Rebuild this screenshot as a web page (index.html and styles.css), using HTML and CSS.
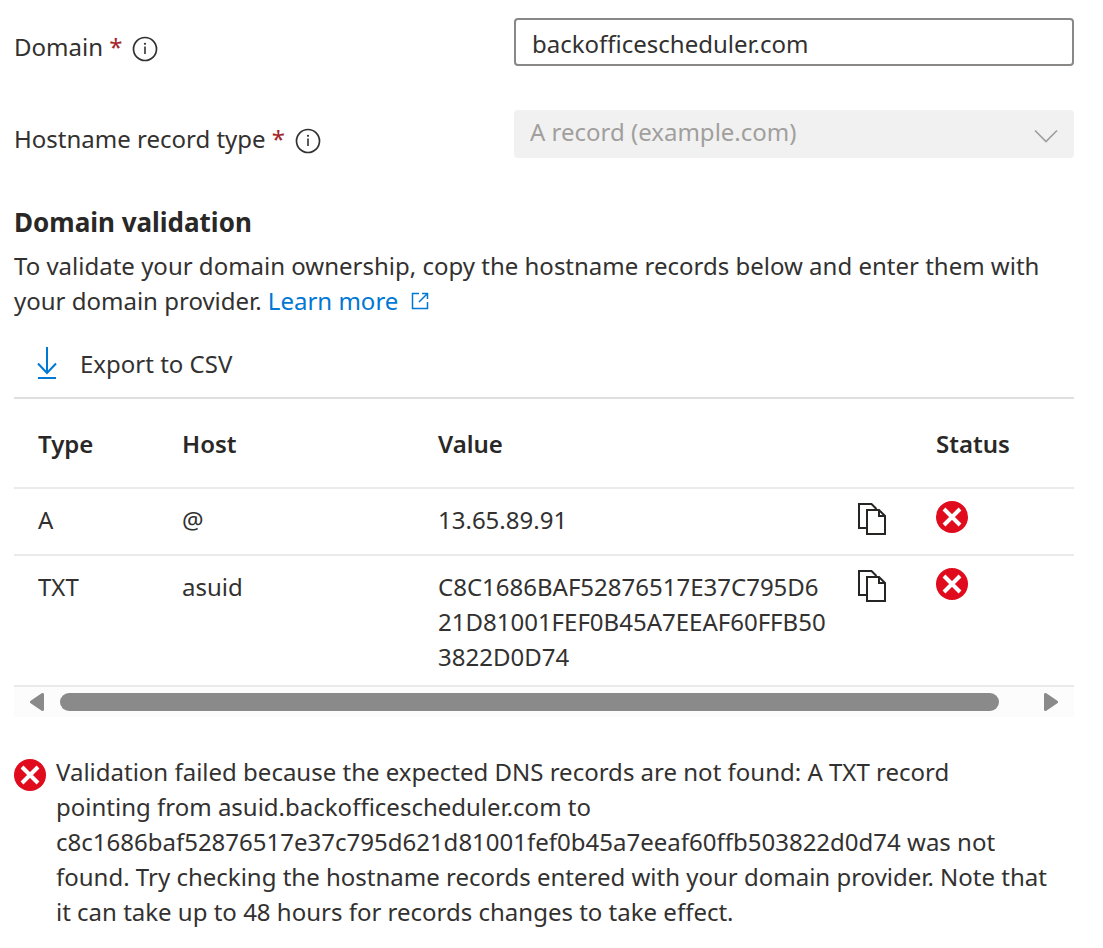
FILE: index.html
```html
<!DOCTYPE html>
<html lang="en">
<head>
    <meta charset="UTF-8">
    <meta name="viewport" content="width=device-width, initial-scale=1.0">
    <title>Add custom domain</title>
    <link rel="stylesheet" href="styles.css">
</head>
<body>
    <svg class="symbols" width="0" height="0" aria-hidden="true">
        <symbol id="info" viewBox="0 0 26 26">
            <circle cx="13" cy="13" r="11.5" fill="none" stroke="currentColor" stroke-width="1.7"/>
            <path d="M13 10.5V18" stroke="currentColor" stroke-width="1.6"/>
            <circle cx="13" cy="7.8" r="1.1" fill="currentColor"/>
        </symbol>
        <symbol id="error" viewBox="0 0 32 32">
            <circle cx="16" cy="16" r="16" fill="#e00b1c"/>
            <path d="M8 8l16 16M24 8L8 24" stroke="#fff" stroke-width="4"/>
        </symbol>
        <symbol id="copy" viewBox="0 0 28 32">
            <path d="M9 25H1V1h12.500l5 5M9 7h12l6 6v18H9zM21 7v6h6" fill="none" stroke="#262524" stroke-width="2"/>
        </symbol>
    </svg>

    <div class="page">
        <form>
            <div class="field">
                <div class="field-label">
                    <label for="domain">Domain <span class="required">*</span></label>
                    <svg class="info"><use href="#info"/></svg>
                </div>
                <input type="text" id="domain" value="backofficescheduler.com">
            </div>
            <div class="field">
                <div class="field-label">
                    <label for="record-type">Hostname record type <span class="required">*</span></label>
                    <svg class="info"><use href="#info"/></svg>
                </div>
                <div class="select-wrap">
                    <select id="record-type" disabled>
                        <option>A record (example.com)</option>
                    </select>
                    <svg class="chevron" viewBox="0 0 24 14"><path d="M1 1.500L12 12.500 23 1.500" fill="none" stroke="#a19f9d" stroke-width="1.7"/></svg>
                </div>
            </div>
        </form>

        <h2>Domain validation</h2>
        <p class="intro">To validate your domain ownership, copy the hostname records below and enter them with<br>
        your domain provider. <a href="#">Learn more <svg class="external" viewBox="0 0 18 18"><path d="M8 1.500H1.500v15h15V10M11 1.500h5.500V7M16.500 1.500L8 10" fill="none" stroke="currentColor" stroke-width="1.500"/></svg></a></p>

        <button type="button" class="export">
            <svg viewBox="0 0 22 34"><path d="M11 0v26M2 16.500l9 9.500 9-9.500M2 31h18" fill="none" stroke="#0078d4" stroke-width="2"/></svg>
            Export to CSV
        </button>

        <table>
            <colgroup>
                <col class="col-type">
                <col class="col-host">
                <col class="col-value">
                <col class="col-copy">
                <col>
            </colgroup>
            <thead>
                <tr>
                    <th>Type</th>
                    <th>Host</th>
                    <th>Value</th>
                    <th></th>
                    <th>Status</th>
                </tr>
            </thead>
            <tbody>
                <tr>
                    <td>A</td>
                    <td>@</td>
                    <td>13.65.89.91</td>
                    <td class="icon-cell"><button type="button" class="copy" aria-label="Copy"><svg><use href="#copy"/></svg></button></td>
                    <td class="status"><svg class="error"><use href="#error"/></svg></td>
                </tr>
                <tr>
                    <td>TXT</td>
                    <td>asuid</td>
                    <td>C8C1686BAF52876517E37C795D6<br>21D81001FEF0B45A7EEAF60FFB50<br>3822D0D74</td>
                    <td class="icon-cell"><button type="button" class="copy" aria-label="Copy"><svg><use href="#copy"/></svg></button></td>
                    <td class="status"><svg class="error"><use href="#error"/></svg></td>
                </tr>
            </tbody>
        </table>
        <div class="scrollbar">
            <svg viewBox="0 0 14 18"><path d="M12.500 1.500v15L1.500 9z" fill="#8a8a8a" stroke="#8a8a8a" stroke-width="3" stroke-linejoin="round"/></svg>
            <div class="track"><div class="thumb"></div></div>
            <svg viewBox="0 0 14 18"><path d="M1.500 1.500v15L12.500 9z" fill="#8a8a8a" stroke="#8a8a8a" stroke-width="3" stroke-linejoin="round"/></svg>
        </div>

        <div class="message">
            <svg class="error"><use href="#error"/></svg>
            <p>Validation failed because the expected DNS records are not found: A TXT record<br>
            pointing from asuid.backofficescheduler.com to<br>
            c8c1686baf52876517e37c795d621d81001fef0b45a7eeaf60ffb503822d0d74 was not<br>
            found. Try checking the hostname records entered with your domain provider. Note that<br>
            it can take up to 48 hours for records changes to take effect.</p>
        </div>
    </div>
</body>
</html>
```
FILE: styles.css
```css
* {
    box-sizing: border-box;
}

body {
    margin: 0;
    background-color: #fff;
    color: #323130;
    font-family: "Noto Sans", "Segoe UI", sans-serif;
    font-size: 24px;
    line-height: 35px;
}

.symbols {
    position: absolute;
}

.page {
    padding: 18px 29px 18px 14px;
}

.field {
    display: flex;
    align-items: center;
    margin-bottom: 44px;
}

.field-label {
    display: flex;
    align-items: center;
    flex: 1;
    padding-top: 8px;
}

.required {
    color: #a4262c;
}

.info {
    width: 26px;
    height: 26px;
    margin-top: 6px;
    margin-left: 10px;
}

.field input,
.select-wrap {
    width: 53%;
    max-width: 560px;
    height: 48px;
}

.field input {
    padding: 2px 16px 0;
    border: 2px solid #8a8886;
    border-radius: 4px;
    background-color: #fff;
    color: #323130;
    font: inherit;
}

.select-wrap {
    position: relative;
}

.field select {
    width: 100%;
    height: 48px;
    padding: 0 48px 6px 16px;
    border: none;
    border-radius: 4px;
    background-color: #f1f1f1;
    color: #a19f9d;
    font: inherit;
    opacity: 1;
    appearance: none;
}

/* arrow sits on top of the select */
.chevron {
    position: absolute;
    top: 19px;
    right: 16px;
    width: 24px;
    height: 14px;
    pointer-events: none;
}

h2 {
    margin: 0 0 8px;
    padding-top: 3px;
    font-size: 26px;
    font-weight: 700;
    color: #292827;
}

.intro {
    margin: 0 0 28px;
}

a {
    display: inline-block;
    color: #0078d4;
    text-decoration: none;
}

a:hover {
    text-decoration: underline;
}

.external {
    width: 18px;
    height: 18px;
    margin-left: 6px;
}

button {
    padding: 0;
    border: none;
    background: none;
    color: inherit;
    font: inherit;
    cursor: pointer;
}

.export {
    display: flex;
    align-items: center;
    gap: 22px;
    margin-bottom: 16px;
    padding-left: 22px;
}

.export svg {
    width: 22px;
    height: 34px;
}

table {
    width: 100%;
    table-layout: fixed;
    border-collapse: separate;
    border-spacing: 0;
    border-top: 2px solid #e1dfdd;
}

.col-type {
    width: 144px;
}

.col-host {
    width: 256px;
}

.col-value {
    width: 420px;
}

.col-copy {
    width: 78px;
}

th,
td {
    border-bottom: 2px solid #eaeaea;
    text-align: left;
}

th {
    height: 90px;
    padding: 0 0 0 24px;
    font-weight: 600;
    color: #292827;
}

td {
    height: 67px;
    padding: 13px 0 11px 24px;
    vertical-align: top;
    white-space: nowrap;
}

.icon-cell {
    padding-top: 14px;
}

.status {
    padding-top: 12px;
}

.copy,
.copy svg,
.error {
    display: block;
    height: 32px;
}

.copy svg {
    width: 28px;
}

.error {
    flex: none;
    width: 32px;
}

.scrollbar {
    display: flex;
    align-items: center;
    gap: 16px;
    height: 30px;
    padding: 0 16px;
    background-color: #fcfcfc;
}

.scrollbar svg {
    width: 14px;
    height: 18px;
}

.track {
    flex: 1;
}

.thumb {
    width: 97%;
    height: 18px;
    border-radius: 9px;
    background-color: #8a8a8a;
}

.message {
    display: flex;
    gap: 10px;
    margin-top: 37px;
}

.message .error {
    margin-top: 5px;
}

.message p {
    margin: 0;
}
```
